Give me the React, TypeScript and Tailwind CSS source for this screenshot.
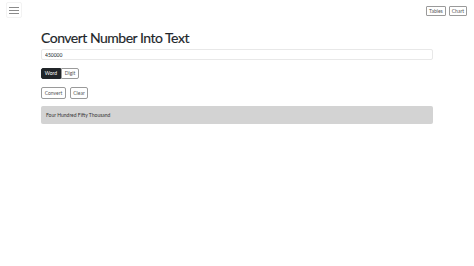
import { useState, type ChangeEvent } from "react";

const ones = ["", "One", "Two", "Three", "Four", "Five", "Six", "Seven", "Eight", "Nine", "Ten", "Eleven", "Twelve", "Thirteen", "Fourteen", "Fifteen", "Sixteen", "Seventeen", "Eighteen", "Nineteen"];
const tens = ["", "", "Twenty", "Thirty", "Forty", "Fifty", "Sixty", "Seventy", "Eighty", "Ninety"];

const chunk = (n: number): string => {
  const parts: string[] = [];
  if (n >= 100) {
    parts.push(ones[Math.floor(n / 100)], "Hundred");
    n = n % 100;
  }
  if (n >= 20) {
    parts.push(tens[Math.floor(n / 10)]);
    n = n % 10;
  }
  if (n > 0) parts.push(ones[n]);
  return parts.join(" ");
};

const toWords = (num: number) => {
  if (!num) return "Zero";
  const scales = ["", "Thousand", "Million", "Billion"];
  const out: string[] = [];
  let i = 0;
  while (num > 0) {
    const c = num % 1000;
    if (c) out.unshift(chunk(c) + (scales[i] ? " " + scales[i] : ""));
    num = Math.floor(num / 1000);
    i++;
  }
  return out.join(" ");
};

const App = () => {
  const [value, setValue] = useState("450000");
  const [mode, setMode] = useState<"word" | "digit">("word");
  const [result, setResult] = useState("Four Hundred Fifty Thousand");

  const handleChange = (e: ChangeEvent<HTMLInputElement>) => setValue(e.target.value);

  const convert = () => {
    const n = parseInt(value, 10);
    if (isNaN(n)) return;
    setResult(mode === "word" ? toWords(n) : n.toLocaleString());
  };

  return (
    <div className="min-h-[266px] w-full bg-white text-[#212529]" style={{ fontFamily: 'Lato, "Open Sans", sans-serif' }}>
      <div className="flex items-start justify-between pl-[6px] pr-[7px] pt-[2px]">
        <button className="flex h-[16px] w-[16px] flex-col items-center justify-center gap-[2px] rounded-[2px] border border-[#f3f3f3]">
          <span className="block h-[1px] w-[10px] bg-[#8a8a8a]" />
          <span className="block h-[1px] w-[10px] bg-[#8a8a8a]" />
          <span className="block h-[1px] w-[10px] bg-[#8a8a8a]" />
        </button>
        <div className="mt-[4px] flex gap-[3px]">
          <button className="h-[10px] rounded-[1px] border border-[#9a9a9a] px-[2px] text-[5px] leading-none text-[#555]">Tables</button>
          <button className="h-[10px] rounded-[1px] border border-[#9a9a9a] px-[2px] text-[5px] leading-none text-[#555]">Chart</button>
        </div>
      </div>

      <div className="ml-[41px] mr-[41px]">
        <h1 className="mt-[12px] text-[14px] font-normal leading-[15px] tracking-[-0.5px] [-webkit-text-stroke:0.15px_#212529]">
          Convert Number Into Text
        </h1>
        <input
          value={value}
          onChange={handleChange}
          className="mt-[4px] block h-[11px] w-full rounded-[2px] border border-[#e8e8e8] px-[3px] text-[5px] leading-none outline-none"
        />
        <div className="mt-[8px] flex">
          <button
            onClick={() => setMode("word")}
            className={
              mode === "word"
                ? "h-[11px] w-[20px] rounded-l-[2px] border border-[#212529] bg-[#212529] text-[5px] leading-none text-white"
                : "h-[11px] w-[20px] rounded-l-[2px] border border-[#9a9a9a] bg-white text-[5px] leading-none text-[#555]"
            }
          >
            Word
          </button>
          <button
            onClick={() => setMode("digit")}
            className={
              mode === "digit"
                ? "h-[11px] w-[18px] rounded-r-[2px] border border-[#212529] bg-[#212529] text-[5px] leading-none text-white"
                : "h-[11px] w-[18px] rounded-r-[2px] border border-[#9a9a9a] bg-white text-[5px] leading-none text-[#555]"
            }
          >
            Digit
          </button>
        </div>
        <div className="mt-[8px] flex gap-[4px]">
          <button onClick={convert} className="h-[12px] w-[25px] rounded-[2px] border border-[#9a9a9a] text-[5px] leading-none text-[#555]">
            Convert
          </button>
          <button
            onClick={() => {
              setValue("");
              setResult("");
            }}
            className="h-[12px] w-[18px] rounded-[2px] border border-[#9a9a9a] text-[5px] leading-none text-[#555]"
          >
            Clear
          </button>
        </div>
        <div className="mt-[7px] flex h-[18px] items-center rounded-[2px] bg-[#d3d3d3] px-[5px] text-[5px] leading-none text-[#333]">
          {result}
        </div>
      </div>
    </div>
  );
};

export default App;
